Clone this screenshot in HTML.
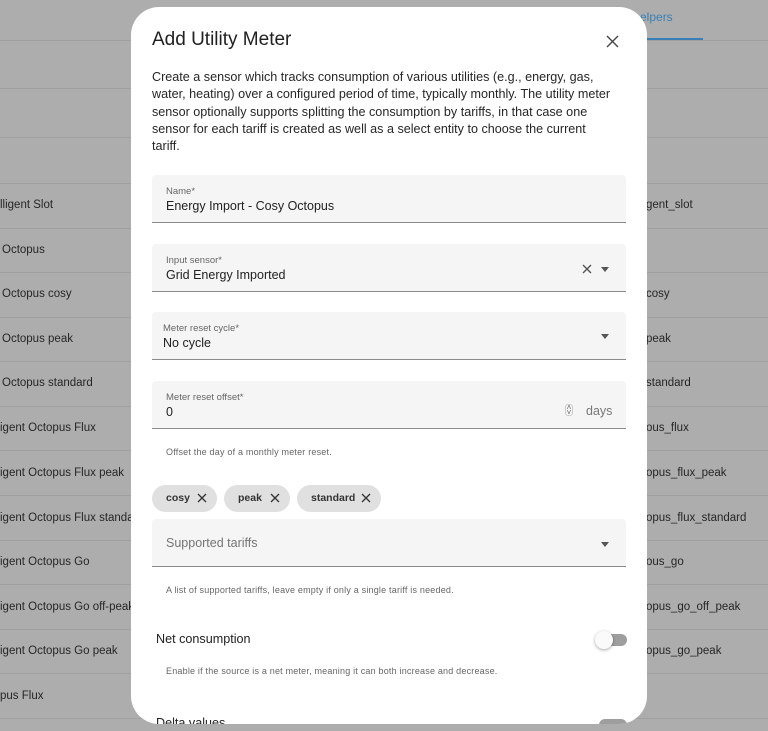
<!DOCTYPE html>
<html><head><style>
*{margin:0;padding:0;box-sizing:border-box}
body{width:768px;height:731px;overflow:hidden;background:#adadad;font-family:"Liberation Sans",sans-serif;position:relative}
.hl{position:absolute;left:0;right:0;height:1px;background:#a0a0a0}
.bt{position:absolute;font-size:11.5px;color:#262626}
.dlg{position:absolute;left:131px;top:7px;width:516px;height:717px;background:#fff;border-radius:28px;overflow:hidden}
.a{position:absolute}
.field{position:absolute;left:21px;width:474px;background:#f5f5f5;border-radius:4px 4px 0 0;border-bottom:1px solid #8a8a8a}
.lab{position:absolute;font-size:9.5px;color:#666}
.val{position:absolute;font-size:12.5px;color:#212121}
.help{position:absolute;font-size:9px;color:#666;letter-spacing:.2px}
.arrow{position:absolute;width:0;height:0;border-left:4.5px solid transparent;border-right:4.5px solid transparent;border-top:5px solid #555}
.chip{position:absolute;top:478px;height:27px;border-radius:14px;background:#e0e0e0;font-size:10.5px;font-weight:bold;color:#333;line-height:27px;padding-left:14px}
.chip svg{position:absolute;top:8px}
</style></head><body>
<div class="hl" style="top:40px"></div>
<div class="hl" style="top:88px"></div>
<div class="hl" style="top:137px"></div>
<div class="hl" style="top:183px"></div>
<div class="hl" style="top:228px"></div>
<div class="hl" style="top:272px"></div>
<div class="hl" style="top:317px"></div>
<div class="hl" style="top:361px"></div>
<div class="hl" style="top:406px"></div>
<div class="hl" style="top:450px"></div>
<div class="hl" style="top:495px"></div>
<div class="hl" style="top:540px"></div>
<div class="hl" style="top:584px"></div>
<div class="hl" style="top:629px"></div>
<div class="hl" style="top:673px"></div>
<div class="hl" style="top:718px"></div>
<div class="a" style="left:640px;top:38px;width:63px;height:2px;background:#3a7fb8"></div>
<div class="bt" style="left:640px;top:10px;color:#3a7fb8;font-size:12px">elpers</div>
<div class="bt" style="left:0;top:199px">lligent Slot</div>
<div class="bt" style="left:2px;top:244px">Octopus</div>
<div class="bt" style="left:2px;top:288px">Octopus cosy</div>
<div class="bt" style="left:2px;top:333px">Octopus peak</div>
<div class="bt" style="left:2px;top:377px">Octopus standard</div>
<div class="bt" style="left:0;top:422px">igent Octopus Flux</div>
<div class="bt" style="left:0;top:467px">igent Octopus Flux peak</div>
<div class="bt" style="left:0;top:512px">igent Octopus Flux standard</div>
<div class="bt" style="left:0;top:556px">igent Octopus Go</div>
<div class="bt" style="left:0;top:601px">igent Octopus Go off-peak</div>
<div class="bt" style="left:0;top:645px">igent Octopus Go peak</div>
<div class="bt" style="left:0;top:690px">pus Flux</div>
<div class="bt" style="left:646px;top:199px">gent_slot</div>
<div class="bt" style="left:646px;top:288px">cosy</div>
<div class="bt" style="left:646px;top:333px">peak</div>
<div class="bt" style="left:646px;top:377px">standard</div>
<div class="bt" style="left:646px;top:422px">ous_flux</div>
<div class="bt" style="left:646px;top:467px">opus_flux_peak</div>
<div class="bt" style="left:646px;top:512px">opus_flux_standard</div>
<div class="bt" style="left:646px;top:556px">ous_go</div>
<div class="bt" style="left:646px;top:601px">opus_go_off_peak</div>
<div class="bt" style="left:646px;top:645px">opus_go_peak</div>

<div class="dlg">
<div class="a" style="left:21px;top:22px;font-size:19px;color:#212121">Add Utility Meter</div>
<svg class="a" style="left:475px;top:28px" width="13" height="13" viewBox="0 0 13 13"><path d="M1 1L12 12M12 1L1 12" stroke="#444" stroke-width="1.4"/></svg>
<div class="a" style="left:21px;top:62px;width:490px;white-space:nowrap;font-size:12.6px;line-height:17.3px;color:#262626">Create a sensor which tracks consumption of various utilities (e.g., energy, gas,<br>water, heating) over a configured period of time, typically monthly. The utility meter<br>sensor optionally supports splitting the consumption by tariffs, in that case one<br>sensor for each tariff is created as well as a select entity to choose the current<br>tariff.</div>

<div class="field" style="top:168px;height:48px"><div class="lab" style="left:14px;top:11px">Name*</div><div class="val" style="left:14px;top:24px">Energy Import - Cosy Octopus</div></div>

<div class="field" style="top:237px;height:48px"><div class="lab" style="left:14px;top:11px">Input sensor*</div><div class="val" style="left:14px;top:24px">Grid Energy Imported</div>
<svg class="a" style="left:430px;top:20px" width="10" height="10" viewBox="0 0 10 10"><path d="M1 1L9 9M9 1L1 9" stroke="#555" stroke-width="1.4"/></svg>
<div class="arrow" style="left:449px;top:23px"></div></div>

<div class="field" style="top:305px;height:48px"><div class="lab" style="left:11px;top:11px">Meter reset cycle*</div><div class="val" style="left:11px;top:24px">No cycle</div><div class="arrow" style="left:449px;top:22px"></div></div>

<div class="field" style="top:374px;height:48px"><div class="lab" style="left:14px;top:11px">Meter reset offset*</div><div class="val" style="left:14px;top:24px">0</div>
<div class="a" style="left:413px;top:23px;font-size:8px;color:#666;line-height:5px;width:8px;height:12px;border:1px solid #ccc;border-radius:3px;text-align:center">˄<br>˅</div>
<div class="a" style="left:434px;top:23px;font-size:12.5px;color:#777">days</div></div>
<div class="help" style="left:35px;top:440px">Offset the day of a monthly meter reset.</div>

<div class="chip" style="left:21px;width:65px">cosy<svg style="left:45px" width="10" height="10" viewBox="0 0 10 10"><path d="M1 1L9 9M9 1L1 9" stroke="#333" stroke-width="1.3"/></svg></div>
<div class="chip" style="left:93px;width:66px">peak<svg style="left:46px" width="10" height="10" viewBox="0 0 10 10"><path d="M1 1L9 9M9 1L1 9" stroke="#333" stroke-width="1.3"/></svg></div>
<div class="chip" style="left:166px;width:84px">standard<svg style="left:64px" width="10" height="10" viewBox="0 0 10 10"><path d="M1 1L9 9M9 1L1 9" stroke="#333" stroke-width="1.3"/></svg></div>

<div class="field" style="top:512px;height:48px"><div class="val" style="left:14px;top:17px;color:#757575">Supported tariffs</div><div class="arrow" style="left:449px;top:23px"></div></div>
<div class="help" style="left:35px;top:578px">A list of supported tariffs, leave empty if only a single tariff is needed.</div>

<div class="a" style="left:25px;top:625px;font-size:12.6px;color:#212121">Net consumption</div>
<div class="a" style="left:468px;top:627px;width:28px;height:12px;border-radius:6px;background:#9e9e9e"></div>
<div class="a" style="left:464px;top:624px;width:18px;height:18px;border-radius:50%;background:#fafafa;box-shadow:0 1px 3px rgba(0,0,0,.35)"></div>
<div class="help" style="left:35px;top:659px">Enable if the source is a net meter, meaning it can both increase and decrease.</div>
<div class="a" style="left:25px;top:709px;font-size:12.6px;color:#212121">Delta values</div>
<div class="a" style="left:468px;top:712px;width:28px;height:12px;border-radius:6px;background:#9e9e9e"></div>
</div>
</body></html>
